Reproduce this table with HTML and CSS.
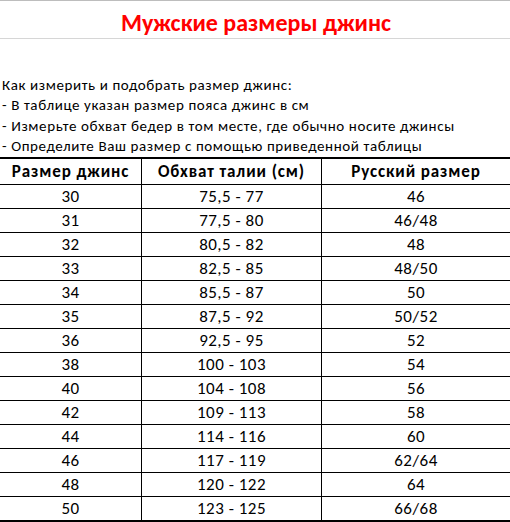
FILE: index.html
```html
<!DOCTYPE html>
<html lang="ru">
<head>
<meta charset="utf-8">
<title>Мужские размеры джинс</title>
<link rel="stylesheet" href="styles.css">
</head>
<body>
<div class="sheet">
  <div class="title-row"><h1 class="title">Мужские размеры джинс</h1></div>
  <div class="notes">
    <p>Как измерить и подобрать размер джинс:</p>
    <p>- В таблице указан размер пояса джинс в см</p>
    <p>- Измерьте обхват бедер в том месте, где обычно носите джинсы</p>
    <p>- Определите Ваш размер с помощью приведенной таблицы</p>
  </div>
  <div class="size-table">
    <div class="row head"><div class="cell">Размер джинс</div><div class="cell">Обхват талии (см)</div><div class="cell">Русский размер</div></div>
    <div class="row"><div class="cell">30</div><div class="cell">75,5 - 77</div><div class="cell">46</div></div>
    <div class="row"><div class="cell">31</div><div class="cell">77,5 - 80</div><div class="cell">46/48</div></div>
    <div class="row"><div class="cell">32</div><div class="cell">80,5 - 82</div><div class="cell">48</div></div>
    <div class="row"><div class="cell">33</div><div class="cell">82,5 - 85</div><div class="cell">48/50</div></div>
    <div class="row"><div class="cell">34</div><div class="cell">85,5 - 87</div><div class="cell">50</div></div>
    <div class="row"><div class="cell">35</div><div class="cell">87,5 - 92</div><div class="cell">50/52</div></div>
    <div class="row"><div class="cell">36</div><div class="cell">92,5 - 95</div><div class="cell">52</div></div>
    <div class="row"><div class="cell">38</div><div class="cell">100 - 103</div><div class="cell">54</div></div>
    <div class="row"><div class="cell">40</div><div class="cell">104 - 108</div><div class="cell">56</div></div>
    <div class="row"><div class="cell">42</div><div class="cell">109 - 113</div><div class="cell">58</div></div>
    <div class="row"><div class="cell">44</div><div class="cell">114 - 116</div><div class="cell">60</div></div>
    <div class="row"><div class="cell">46</div><div class="cell">117 - 119</div><div class="cell">62/64</div></div>
    <div class="row"><div class="cell">48</div><div class="cell">120 - 122</div><div class="cell">64</div></div>
    <div class="row last"><div class="cell">50</div><div class="cell">123 - 125</div><div class="cell">66/68</div></div>
  </div>
  <div class="gridlines"><div class="grid-cell"></div><div class="grid-cell"></div><div class="grid-cell"></div></div>
</div>
</body>
</html>
```

FILE: styles.css
```css
html, body {
  margin: 0;
  padding: 0;
  background: #ffffff;
}

body {
  font-family: "Carlito", "Open Sans", "Noto Sans", sans-serif;
  color: #000000;
  overflow: hidden;
}

.sheet {
  border-top: 1px solid #bdbdbd;
  width: 510px;
}

.title-row {
  box-sizing: border-box;
  height: 38px;
  padding-top: 8px;
  border-bottom: 1px solid #d6d6d6;
  display: flex;
  justify-content: center;
}

.title {
  margin: 0;
  font-size: 24px;
  line-height: 28px;
  font-weight: 700;
  color: #ff0000;
  padding-left: 2px;
}

.notes {
  margin-top: 36px;
  padding-left: 2px;
  font-size: 15px;
  letter-spacing: 0.6px;
  line-height: 20.4px;
}

.notes p {
  margin: 0;
  white-space: nowrap;
}

.size-table {
  border-top: 2px solid #000000;
  font-size: 17px;
  letter-spacing: 0.5px;
}

.row {
  display: grid;
  grid-template-columns: 141px 180px 1fr;
  height: 24px;
  box-sizing: border-box;
  border-bottom: 1px solid #000000;
}

.row.head {
  height: 26px;
  font-weight: 700;
  letter-spacing: 0.9px;
}

.row.last {
  height: 25px;
  border-bottom-width: 2px;
}

.cell {
  display: flex;
  align-items: center;
  justify-content: center;
  line-height: 1;
  white-space: nowrap;
}

.cell + .cell {
  border-left: 1px solid #000000;
}

.gridlines {
  display: grid;
  grid-template-columns: 141px 180px 1fr;
  height: 10px;
}

.grid-cell + .grid-cell {
  border-left: 1px solid #e0e0e0;
}
```
